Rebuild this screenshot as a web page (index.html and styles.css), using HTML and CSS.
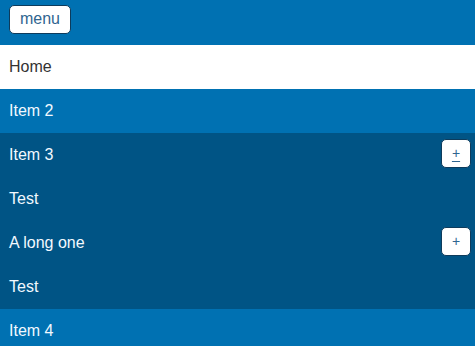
FILE: index.html
```html
<!DOCTYPE html>
<html>
<head>
<meta charset="utf-8">
<link rel="stylesheet" href="styles.css">
</head>
<body>
<div class="header">
  <button class="menu-btn">menu</button>
</div>
<ul class="nav">
  <li class="row home">Home</li>
  <li class="row blue">Item 2</li>
  <li class="row dark"><span>Item 3</span><button class="toggle active"><span class="glyph">+</span></button></li>
  <li class="row dark">Test</li>
  <li class="row dark"><span>A long one</span><button class="toggle"><span class="glyph">+</span></button></li>
  <li class="row dark">Test</li>
  <li class="row blue">Item 4</li>
</ul>
</body>
</html>
```
FILE: styles.css
```css
html, body {
  margin: 0;
  padding: 0;
  background: #0071b2;
  font-family: "Liberation Sans", Arial, sans-serif;
  font-size: 16px;
}
.header {
  height: 45px;
  box-sizing: border-box;
  padding: 5px 9px 0;
  background: #0071b2;
}
.menu-btn {
  width: 62px;
  height: 29px;
  background: #fff;
  border: 1px solid #0d3b5c;
  border-radius: 5px;
  color: #2f6590;
  font-family: "Liberation Sans", Arial, sans-serif;
  font-size: 16px;
  padding: 0 0 2px;
}
.nav {
  list-style: none;
  margin: 0;
  padding: 0;
}
.row {
  height: 44px;
  box-sizing: border-box;
  padding: 0 4px 0 9px;
  display: flex;
  align-items: center;
  justify-content: space-between;
  color: #f2f9ff;
}
.home {
  background: #fff;
  color: #333;
}
.blue {
  background: #0071b2;
}
.dark {
  background: #005485;
}
.toggle {
  width: 30px;
  height: 29px;
  margin-bottom: 3px;
  background: #fff;
  border: 1px solid #0d3b5c;
  border-radius: 5px;
  color: #2f6590;
  font-family: "Liberation Sans", Arial, sans-serif;
  font-size: 14px;
  padding: 0 0 1px;
}
.active .glyph {
  text-decoration: underline;
  text-underline-offset: 3px;
}
```
